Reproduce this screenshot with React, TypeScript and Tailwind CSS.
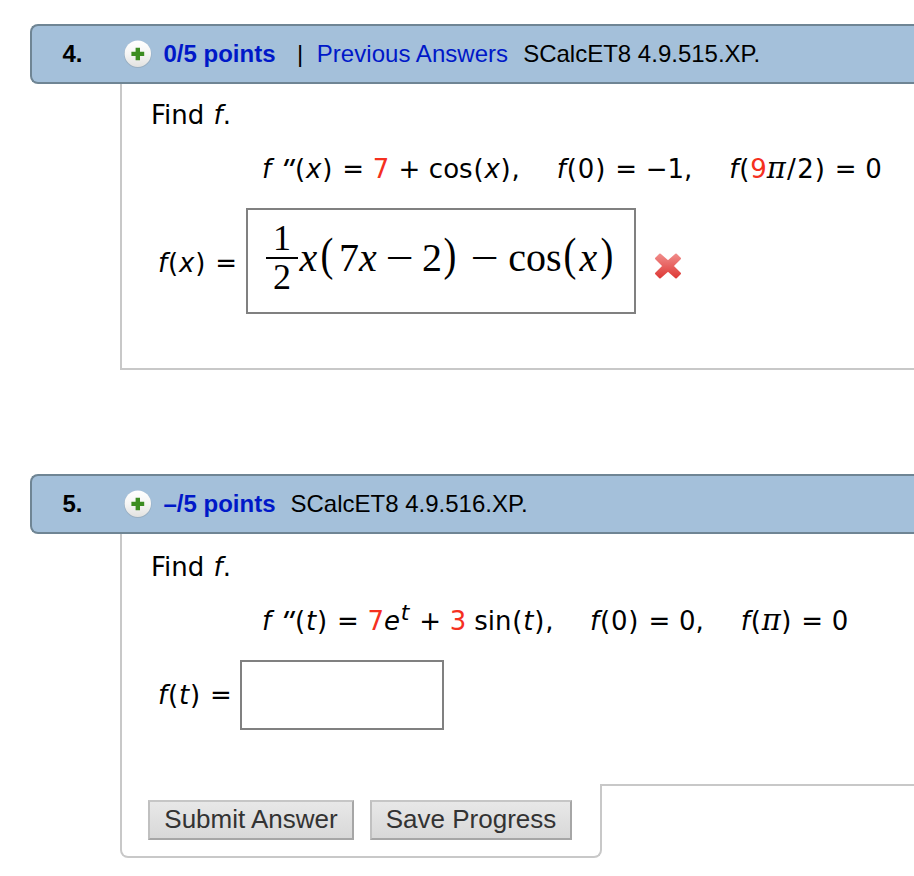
import type { ReactNode } from "react";
import { twMerge } from "tailwind-merge";

// Upright glyph centred in a slot, e.g. parentheses and slashes
function Sym({ children, className }: { children: ReactNode; className?: string }) {
  return (
    <span className={twMerge("inline-block w-[11.8px] text-center", className)}>
      {children}
    </span>
  );
}

function Op({ children }: { children: ReactNode }) {
  return <Sym className="mx-[9.15px] w-[21.3px]">{children}</Sym>;
}

function Red({ children }: { children: ReactNode }) {
  return <span className="text-[#f5301f]">{children}</span>;
}

function Paren({ children }: { children: ReactNode }) {
  return (
    <>
      <Sym>(</Sym>
      {children}
      <Sym>)</Sym>
    </>
  );
}

function Prime() {
  return (
    <span className="mr-px ml-[10px] inline-block w-[12px] scale-x-125 -skew-x-[18deg]">
      "
    </span>
  );
}

function Pi() {
  return (
    <Sym className="w-[18.7px] font-['DejaVu_Serif',serif] text-[29px] leading-none italic">
      π
    </Sym>
  );
}

function PlusIcon() {
  return (
    <svg viewBox="0 0 30 30" className="h-[30px] w-[30px]">
      <defs>
        <linearGradient id="disc" x1="0" y1="0" x2="0" y2="1">
          <stop offset="0" stopColor="#ffffff" />
          <stop offset="0.5" stopColor="#f6f6f5" />
          <stop offset="1" stopColor="#e2e2e0" />
        </linearGradient>
      </defs>
      <circle cx="14.800" cy="15.400" r="13.700" fill="#8a98a5" opacity="0.45" />
      <circle cx="14.800" cy="14.700" r="13.200" fill="url(#disc)" />
      <path
        d="M12.600 8.700h4.400v4h4.200v4.400h-4.200v4.200h-4.400v-4.200H8.400v-4.400h4.200z"
        fill="#3c8d22"
      />
    </svg>
  );
}

function WrongIcon() {
  return (
    <svg viewBox="0 0 28 28" className="h-7 w-7">
      <defs>
        <linearGradient id="cross" x1="0" y1="0" x2="0" y2="1">
          <stop offset="0" stopColor="#f08a88" />
          <stop offset="1" stopColor="#de3b38" />
        </linearGradient>
      </defs>
      <path
        d="M6 2.500 14 9.500l8-7 4 4-7.500 7.500 7.500 7.500-4 4L14 18.500l-8 7-4-4L9.500 14 2 6.500z"
        fill="url(#cross)"
        stroke="url(#cross)"
        strokeWidth="2"
        strokeLinejoin="round"
      />
    </svg>
  );
}

function QuestionHeader({
  number,
  points,
  code,
  previous,
}: {
  number: string;
  points: string;
  code: string;
  previous?: boolean;
}) {
  return (
    <header className="ml-[30px] flex h-[60px] items-center rounded-l-lg border-2 border-r-0 border-[#6f8594] bg-[#a4c0da] font-['Liberation_Sans',sans-serif] text-2xl whitespace-nowrap">
      <span className="ml-[30.5px] w-[60.5px] font-bold">{number}.</span>
      <PlusIcon />
      <span className="ml-[10.5px] font-bold text-[#0018c8]">{points}</span>
      {previous && (
        <>
          <span className="ml-[21.5px]">|</span>
          <span className="ml-[13.5px] tracking-[0.04px] text-[#0018c8]">Previous Answers</span>
        </>
      )}
      <span className="ml-[15px]">{code}</span>
    </header>
  );
}

function Button({ children, className }: { children: ReactNode; className?: string }) {
  return (
    <button
      className={twMerge(
        "h-10 border-2 border-t-[#c6c6c6] border-r-[#a6a6a6] border-b-[#a6a6a6] border-l-[#c0c0c0] bg-linear-to-b from-[#e8e8e8] to-[#d8d8d8] pb-0.5 font-['Liberation_Sans',sans-serif] text-[26px] leading-none whitespace-nowrap text-[#333]",
        className,
      )}
    >
      {children}
    </button>
  );
}

function BigParen({ children }: { children: ReactNode }) {
  return (
    <Sym className="-mt-[3px] w-[16px] scale-x-[0.82] text-[47px]">{children}</Sym>
  );
}

function Minus({ className }: { className?: string }) {
  return <Sym className={twMerge("scale-x-125", className)}>−</Sym>;
}

// Typeset answer: 1/2 x(7x - 2) - cos(x)
function Answer() {
  return (
    <div className="flex h-[106px] w-[390px] border-2 border-[#808080] pt-[10px] pl-[18px] font-['Liberation_Serif',serif] text-[40px] leading-[75px] whitespace-nowrap">
      <span className="flex w-8 flex-col items-center text-[36px] leading-[37px]">
        <span className="h-[39px] w-full border-b-2 border-black text-center">1</span>
        <span className="h-9">2</span>
      </span>
      <Sym className="w-[21px] italic">x</Sym>
      <BigParen>(</BigParen>
      <Sym className="ml-[4px] w-[20px]">7</Sym>
      <Sym className="w-[18px] italic">x</Sym>
      <Minus className="w-[45px]" />
      <Sym className="w-[20px]">2</Sym>
      <BigParen>)</BigParen>
      <Minus className="ml-[3px] w-[47px]" />
      <Sym className="w-[54px]">cos</Sym>
      <BigParen>(</BigParen>
      <Sym className="w-[21px] italic">x</Sym>
      <BigParen>)</BigParen>
    </div>
  );
}

export default function App() {
  return (
    <main className="h-[876px] w-[914px] overflow-hidden bg-white pt-6 font-['DejaVu_Sans',sans-serif] text-[26px] leading-[32px] text-black">
      <QuestionHeader number="4" points="0/5 points" code="SCalcET8 4.9.515.XP." previous />
      <section className="ml-[120px] h-[286px] border-b-2 border-l-2 border-[#c8c8c8] pt-[15px]">
        <p className="ml-[29px]">
          Find <i className="ml-px">f</i>.
        </p>
        <p className="mt-[22px] ml-[140px] whitespace-nowrap">
          <i>f</i>
          <Prime />
          <Paren><i>x</i></Paren>
          <Op>=</Op>
          <Red>7</Red>
          <Op>+</Op>
          cos
          <Paren><i>x</i></Paren>,
          <i className="ml-[37px]">f</i>
          <Paren>0</Paren>
          <Op>=</Op>
          −1,
          <i className="ml-[37px]">f</i>
          <Paren>
            <Red>9</Red>
            <Pi />
            <Sym>/</Sym>2
          </Paren>
          <Op>=</Op>0
        </p>
        <div className="mt-[23px] ml-[36px] flex items-center whitespace-nowrap">
          <span className="w-[88px] pt-1">
            <i>f</i>
            <Paren><i>x</i></Paren>
            <Op>=</Op>
          </span>
          <Answer />
          <span className="mt-[10px] ml-[18px]">
            <WrongIcon />
          </span>
        </div>
      </section>

      <div className="h-[104px]" />

      <QuestionHeader number="5" points="–/5 points" code="SCalcET8 4.9.516.XP." />
      <section className="ml-[120px]">
        <div className="h-[250px] border-l-2 border-[#c8c8c8] pt-[17px]">
          <p className="ml-[29px]">
            Find <i className="ml-px">f</i>.
          </p>
          <p className="mt-[22px] ml-[140px] h-8 whitespace-nowrap">
            <i>f</i>
            <Prime />
            <Paren><i>t</i></Paren>
            <Op>=</Op>
            <Red>7</Red>
            <i>e</i>
            <Sym className="relative -top-[10px] w-[10px] text-[22px] leading-none italic">t</Sym>
            <Op>+</Op>
            <Red>3</Red>
            <span className="ml-[8px]">sin</span>
            <Paren><i>t</i></Paren>,
            <i className="ml-[36.5px]">f</i>
            <Paren>0</Paren>
            <Op>=</Op>
            0,
            <i className="ml-[37px]">f</i>
            <Paren><Pi /></Paren>
            <Op>=</Op>0
          </p>
          <div className="mt-[23px] ml-[36px] flex items-center whitespace-nowrap">
            <span className="w-[82px]">
              <i>f</i>
              <Paren><i>t</i></Paren>
              <Op>=</Op>
            </span>
            <div className="h-[70px] w-[204px] border-2 border-[#808080]" />
          </div>
        </div>
        <div className="flex h-[74px]">
          <div className="flex w-[482px] shrink-0 gap-4 rounded-b-lg border-2 border-t-0 border-[#c8c8c8] pt-4 pl-[26px]">
            <Button className="w-[206px]">Submit Answer</Button>
            <Button className="w-[202px]">Save Progress</Button>
          </div>
          <div className="h-0.5 flex-1 bg-[#c8c8c8]" />
        </div>
      </section>
    </main>
  );
}
